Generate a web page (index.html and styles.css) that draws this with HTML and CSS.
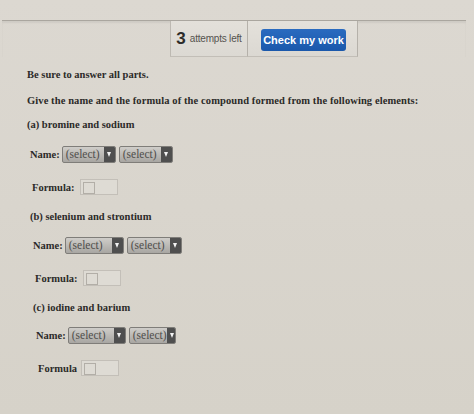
FILE: index.html
```html
<!DOCTYPE html>
<html>
<head>
<meta charset="utf-8">
<link rel="stylesheet" href="styles.css">
</head>
<body>
<div class="page">
  <div class="topbar">
    <div class="attempts"><span class="num">3</span><span class="lbl">attempts left</span></div>
    <div class="checkbox"><button class="check">Check my work</button></div>
  </div>
  <div class="content">
    <p class="intro">Be sure to answer all parts.</p>
    <p class="question">Give the name and the formula of the compound formed from the following elements:</p>

    <div class="part part-a">
      <p class="plabel">(a) bromine and sodium</p>
      <div class="row name-row"><span class="lab">Name:</span>
        <span class="sel w1"><span class="stext">(select)</span><span class="arrow"></span></span>
        <span class="sel w2"><span class="stext">(select)</span><span class="arrow"></span></span>
      </div>
      <div class="row formula-row"><span class="lab">Formula:</span><span class="inp"><span class="caret"></span></span></div>
    </div>

    <div class="part part-b">
      <p class="plabel">(b) selenium and strontium</p>
      <div class="row name-row"><span class="lab">Name:</span>
        <span class="sel w3"><span class="stext">(select)</span><span class="arrow"></span></span>
        <span class="sel w4"><span class="stext">(select)</span><span class="arrow"></span></span>
      </div>
      <div class="row formula-row"><span class="lab">Formula:</span><span class="inp"><span class="caret"></span></span></div>
    </div>

    <div class="part part-c">
      <p class="plabel">(c) iodine and barium</p>
      <div class="row name-row"><span class="lab">Name:</span>
        <span class="sel w5"><span class="stext">(select)</span><span class="arrow"></span></span>
        <span class="sel w6"><span class="stext">(select)</span><span class="arrow"></span></span>
      </div>
      <div class="row formula-row"><span class="lab">Formula</span><span class="inp"><span class="caret"></span></span></div>
    </div>
  </div>
</div>
</body>
</html>
```
FILE: styles.css
```css
html, body {
  margin: 0;
  padding: 0;
}
body {
  background: linear-gradient(180deg, #dcd8d1 0%, #d9d5cd 50%, #d6d2c9 100%);
  width: 474px;
  height: 414px;
  overflow: hidden;
  font-family: "Liberation Serif", "Times New Roman", serif;
  color: #2b2a28;
}
.page {
  padding-top: 20px;
}
.topbar {
  margin-left: 2px;
  width: 464px;
  height: 37px;
  border-top: 1px solid #aaa69f;
  box-shadow: inset 0 2px 2px rgba(0,0,0,0.06);
  display: flex;
  padding-left: 168px;
  box-sizing: border-box;
}
.attempts {
  width: 78px;
  height: 36px;
  border-left: 1px solid #bdb9b2;
  border-right: 1px solid #b5b1aa;
  border-bottom: 1px solid #c2beb7;
  background: linear-gradient(180deg, #e3e0da 0%, #dcd9d3 100%);
  display: flex;
  align-items: center;
  justify-content: center;
  gap: 4px;
  font-family: "Liberation Sans", Arial, sans-serif;
  box-sizing: border-box;
}
.num {
  font-size: 17px;
  font-weight: bold;
  color: #2d2c2a;
}
.lbl {
  font-size: 10px;
  color: #55534f;
  letter-spacing: -0.2px;
}
.checkbox {
  width: 110px;
  height: 36px;
  border-right: 1px solid #b5b1aa;
  border-bottom: 1px solid #c2beb7;
  background: linear-gradient(180deg, #e4e1db 0%, #dbd8d2 100%);
  display: flex;
  align-items: center;
  justify-content: center;
  box-sizing: border-box;
}
.check {
  width: 85px;
  height: 22px;
  border: none;
  border-radius: 3px;
  background: linear-gradient(180deg, #2a6bc0 0%, #1a58ab 100%);
  color: #fff;
  font-family: "Liberation Sans", Arial, sans-serif;
  font-weight: bold;
  font-size: 11px;
  padding: 0;
  margin-top: 2px;
  margin-left: 2px;
}
.content {
  padding-left: 27px;
  font-weight: bold;
  font-size: 10.5px;
}
p {
  margin: 0;
}
.intro {
  margin-top: 12px;
}
.question {
  margin-top: 15px;
  letter-spacing: 0.1px;
}
.plabel {
  margin-top: 13px;
}
.part-a { margin-left: 0; }
.part-b { margin-left: 3px; }
.part-c { margin-left: 6px; }
.part-b .plabel { margin-top: 16px; }
.part-c .plabel { margin-top: 16px; }
.row {
  display: flex;
  align-items: center;
}
.name-row {
  margin-top: 16px;
  margin-left: 3px;
}
.part-b .name-row { margin-top: 15px; }
.part-c .name-row { margin-top: 14px; }
.formula-row {
  margin-top: 16px;
  margin-left: 5px;
}
.part-b .formula-row, .part-c .formula-row { margin-top: 16px; }
.lab {
  margin-right: 2px;
}
.formula-row .lab {
  margin-right: 5px;
}
.part-c .formula-row .lab {
  margin-right: 4px;
}
.sel {
  display: inline-flex;
  height: 17px;
  margin-right: 3px;
  border: 1px solid #7f7d79;
  border-radius: 2px;
  background: linear-gradient(180deg, #cfcdc9 0%, #a8a6a2 100%);
  box-sizing: border-box;
  overflow: hidden;
}
.stext {
  flex: 1;
  font-weight: normal;
  font-size: 11.5px;
  color: #4f4e4b;
  padding-left: 3px;
  line-height: 15px;
  white-space: nowrap;
}
.arrow {
  width: 11px;
  flex: none;
  background: #4f4f4f;
  position: relative;
}
.arrow::after {
  content: "";
  position: absolute;
  left: 3px;
  top: 5px;
  border-left: 2.5px solid transparent;
  border-right: 2.5px solid transparent;
  border-top: 5px solid #f2f2f2;
}
.w1 { width: 54px; }
.w2 { width: 54px; }
.w3 { width: 59px; }
.w4 { width: 55px; }
.w5 { width: 58px; }
.w6 { width: 47px; }
.inp {
  width: 38px;
  height: 16px;
  border: 1px solid #c3bfb8;
  background: #dedbd4;
  box-sizing: border-box;
  position: relative;
}
.caret {
  position: absolute;
  left: 2px;
  top: 2px;
  width: 10px;
  height: 10px;
  border: 1px solid #b2aea7;
}
```
